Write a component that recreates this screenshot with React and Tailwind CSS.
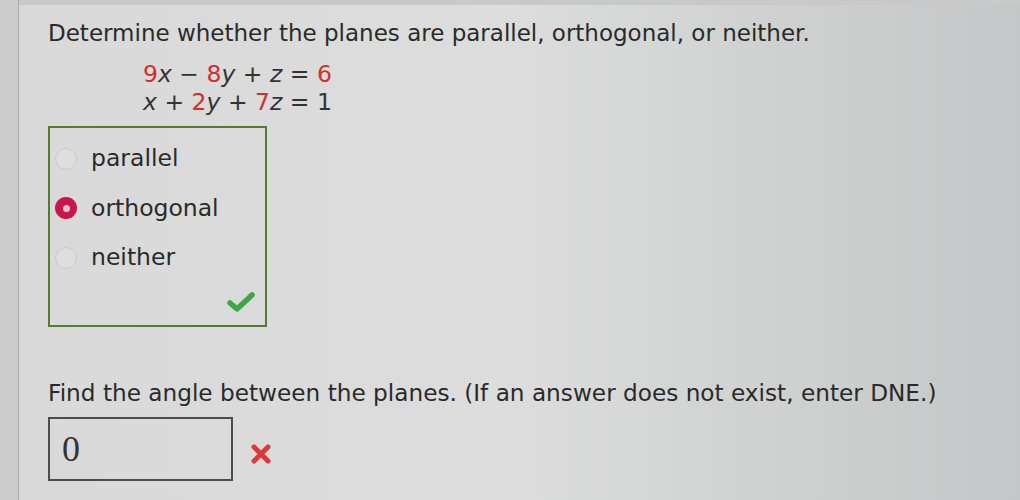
import React from 'react';

function Radio({ checked }) {
  if (checked) {
    return (
      <span className="w-[22px] h-[22px] rounded-full bg-[#c8174a] flex items-center justify-center shrink-0">
        <span className="w-[7px] h-[7px] rounded-full bg-[#e8c4cf]" />
      </span>
    );
  }
  return <span className="w-[22px] h-[22px] rounded-full border border-[#c9c9c9] bg-[#dedede] shrink-0" />;
}

function Red({ children }) {
  return <span className="text-[#d0302c] not-italic">{children}</span>;
}

function V({ children }) {
  return <span className="italic">{children}</span>;
}

export default function App() {
  const options = [
    { label: 'parallel', checked: false },
    { label: 'orthogonal', checked: true },
    { label: 'neither', checked: false },
  ];

  return (
    <div className="w-[1020px] h-[500px] overflow-hidden flex bg-gradient-to-r from-[#d9d9d9] via-[#dcdddc] to-[#c4c7c7] text-[#2a2a2a] font-['DejaVu_Sans',Verdana,sans-serif]">
      <div className="w-[19px] h-full bg-[#cdcdcd] border-r border-[#a9a9a9] shrink-0" />
      <div className="flex-1 flex flex-col border-t-[5px] border-[#c9c9c9] pl-[29px] pt-[13px]">
        <p className="text-[23px] leading-[30px]">
          Determine whether the planes are parallel, orthogonal, or neither.
        </p>

        <div className="ml-[95px] mt-[12px] text-[23.5px] leading-[28px] text-[#333]">
          <div>
            <Red>9</Red><V>x</V> − <Red>8</Red><V>y</V> + <V>z</V> = <Red>6</Red>
          </div>
          <div>
            <V>x</V> + <Red>2</Red><V>y</V> + <Red>7</Red><V>z</V> = 1
          </div>
        </div>

        <div className="mt-[10px] w-[219px] h-[201px] border-2 border-[#557a34] pl-[5px] pt-[6px] flex flex-col">
          {options.map((o) => (
            <div key={o.label} className="flex items-center gap-[14px] h-[49.5px]">
              <Radio checked={o.checked} />
              <span className="text-[23.5px]">{o.label}</span>
            </div>
          ))}
          <div className="flex-1 flex items-end justify-end pr-[10px] pb-[12px]">
            <svg width="28" height="22" viewBox="0 0 28 22">
              <path d="M3 12 L10 18 L25 4" fill="none" stroke="#3aa845" strokeWidth="5.5" strokeLinecap="round" strokeLinejoin="round" />
            </svg>
          </div>
        </div>

        <p className="mt-[51px] text-[23.2px] leading-[30px]">
          Find the angle between the planes. (If an answer does not exist, enter DNE.)
        </p>

        <div className="mt-[9px] flex items-center">
          <div className="w-[185px] h-[64px] border-2 border-[#4d4d4d] flex items-center pl-[12px]">
            <span className="text-[36px] leading-none text-[#333] font-['Liberation_Serif',serif]">0</span>
          </div>
          <svg className="ml-[17px] mt-[10px]" width="22" height="20" viewBox="0 0 22 20">
            <path d="M4 3 L18 17 M18 3 L4 17" stroke="#e0383a" strokeWidth="5" strokeLinecap="round" />
          </svg>
        </div>
      </div>
    </div>
  );
}
